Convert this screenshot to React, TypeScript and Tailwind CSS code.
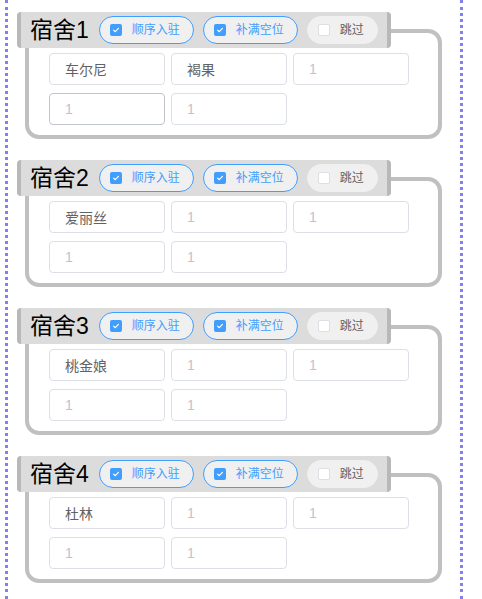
import React from "react";

type Room = { name: string; vals: string[] };

const rooms: Room[] = [
  { name: "宿舍1", vals: ["车尔尼", "褐果", "", "", ""] },
  { name: "宿舍2", vals: ["爱丽丝", "", "", "", ""] },
  { name: "宿舍3", vals: ["桃金娘", "", "", "", ""] },
  { name: "宿舍4", vals: ["杜林", "", "", "", ""] },
];

const font = { fontFamily: '"Liberation Sans", "Noto Sans CJK SC", sans-serif' };

function Check({ checked }: { checked: boolean }) {
  if (checked) {
    return (
      <span className="flex h-[12px] w-[12px] items-center justify-center rounded-[2px] bg-[#409eff]">
        <svg width="8" height="8" viewBox="0 0 8 8" fill="none">
          <path d="M1.6 4.1 L3.3 5.7 L6.4 2.3" stroke="#fff" strokeWidth="1.2" strokeLinecap="round" strokeLinejoin="round" />
        </svg>
      </span>
    );
  }
  return <span className="h-[12px] w-[12px] rounded-[2px] border border-[#dcdfe6] bg-white" />;
}

function Pill({ label, checked }: { label: string; checked: boolean }) {
  return (
    <div
      className={
        checked
          ? "flex h-[28px] items-center rounded-full border border-[#409eff] bg-[#f0f0f0] pl-[10px] pr-[13px]"
          : "flex h-[28px] items-center rounded-full border border-[#f0f0f0] bg-[#f0f0f0] pl-[10px] pr-[13px]"
      }
    >
      <Check checked={checked} />
      <span
        className={
          checked
            ? "ml-[10px] text-[12px] leading-none text-[#409eff]"
            : "ml-[10px] text-[12px] leading-none text-[#606266]"
        }
      >
        {label}
      </span>
    </div>
  );
}

function Field({ value, hover }: { value: string; hover?: boolean }) {
  return (
    <input
      defaultValue={value}
      placeholder="1"
      style={font}
      className={
        hover
          ? "h-[32px] w-[116px] rounded-[4px] border border-[#c0c4cc] bg-white px-[15px] text-[14px] text-[#606266] outline-none placeholder:text-[#c0c4cc]"
          : "h-[32px] w-[116px] rounded-[4px] border border-[#dcdfe6] bg-white px-[15px] text-[14px] text-[#606266] outline-none placeholder:text-[#c0c4cc]"
      }
    />
  );
}

function RoomBlock({ room, idx }: { room: Room; idx: number }) {
  return (
    <div className="flex flex-col">
      <div className="relative z-10 ml-[9px] flex h-[36px] w-fit items-center rounded-[4px] border-x-4 border-[#b8b8b8] bg-[#dcdcdc] pl-[9px] pr-[9px]">
        <span className="mr-[10px] text-[23px] leading-none text-black">{room.name}</span>
        <div className="flex items-center gap-[9px]">
          <Pill label="顺序入驻" checked />
          <Pill label="补满空位" checked />
          <Pill label="跳过" checked={false} />
        </div>
      </div>
      <div className="-mt-[19px] ml-[17px] h-[110px] w-[417px] rounded-[14px] border-4 border-[#c0c0c0] bg-white pl-[20px] pt-[20px]">
        <div className="grid grid-cols-[116px_116px_116px] gap-x-[6px] gap-y-[8px]">
          {room.vals.map((v, i) => (
            <Field key={i} value={v} hover={idx === 0 && i === 3} />
          ))}
        </div>
      </div>
    </div>
  );
}

export default function App() {
  return (
    <div className="min-h-[599px] w-[482px] bg-white" style={font}>
      <div className="ml-[5px] flex min-h-[599px] w-[458px] flex-col gap-[21px] border-x-[3px] border-dotted border-[#8080f0] pt-[12px]">
        {rooms.map((r, i) => (
          <RoomBlock key={i} room={r} idx={i} />
        ))}
      </div>
    </div>
  );
}
